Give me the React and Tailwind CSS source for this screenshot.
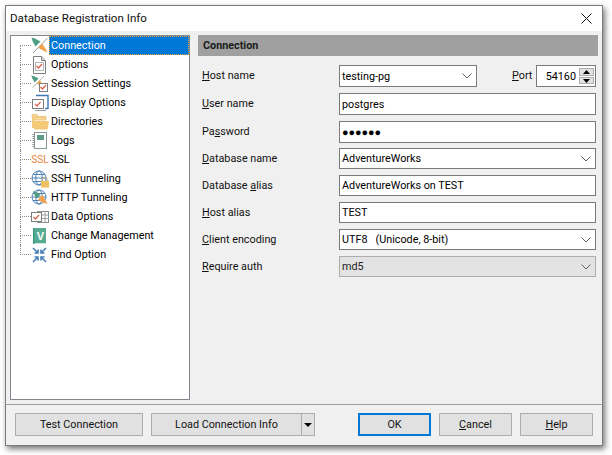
const font = "font-['Roboto',Arial,sans-serif]";

function Plug() {
  return (
    <g>
      <path d="M16.5 1 2 16" stroke="#9a9a9a" strokeWidth="1" fill="none" />
      <path d="M0.5 0.5 4 1.5 9.5 4.5 4.5 9.5 1.5 4Z" fill="#4f9e84" />
      <path d="M9 8.5 11 6.5 14.5 11.5 16.5 15.5 13 14 7.5 11Z" fill="#f5a24c" />
    </g>
  );
}

function Check({ x, y, s = 1 }) {
  return <path d={`M${x} ${y + 2 * s}l${2 * s} ${2 * s} ${3.5 * s} -${4 * s}`} stroke="#d9644f" strokeWidth="1.3" fill="none" />;
}

function Globe() {
  return (
    <g fill="none" stroke="#4f81b5" strokeWidth="1">
      <circle cx="8" cy="8" r="7" />
      <ellipse cx="8" cy="8" rx="3.2" ry="7" />
      <path d="M1 8h14M2 4.5h12M2 11.5h12" />
    </g>
  );
}

const icons = {
  connection: <Plug />,
  options: (
    <>
      <path d="M2.5 0.5h8l4 4v13h-12Z" fill="#fff" stroke="#7d7d7d" />
      <path d="M10.5 0.5v4h4" fill="#ddd" stroke="#7d7d7d" />
      <rect x="4.5" y="6.5" width="8" height="8" fill="#fff" stroke="#b5b5b5" />
      <Check x={5.5} y={8} />
    </>
  ),
  session: (
    <>
      <g transform="scale(0.8)"><Plug /></g>
      <rect x="8.5" y="8.5" width="8" height="8" fill="#fff" stroke="#7d7d7d" />
      <Check x={9.5} y={10} />
    </>
  ),
  display: (
    <>
      <path d="M5 1.5h12v13h-3" fill="none" stroke="#3f77b4" strokeWidth="1.4" />
      <rect x="1.5" y="5.5" width="11" height="9" fill="#fff" stroke="#7d7d7d" />
      <path d="M4 16.5h11" stroke="#999" />
      <Check x={4} y={8} />
    </>
  ),
  directories: (
    <>
      <path d="M1 3V1.5h5l1 2h8V7H3Z" fill="#f7d9a0" stroke="#e9b765" strokeWidth="0.7" />
      <path d="M1 3v12h2V5h11V3Z" fill="#f5c97c" />
      <path d="M3 8h15l-1.5 8.5H3Z" fill="#f3c877" />
    </>
  ),
  logs: (
    <>
      <rect x="3.5" y="0.5" width="12" height="16" fill="#fff" stroke="#8a9a94" />
      <rect x="6" y="3" width="7" height="5" fill="#5d9b88" />
      <path d="M2.5 2v14" stroke="#8a8a8a" strokeDasharray="1 1" strokeWidth="2" />
    </>
  ),
  ssh: (
    <>
      <Globe />
      <path d="M11.5 11V9.5a2.2 2.2 0 0 1 4.5 0V11" fill="none" stroke="#b9a98a" strokeWidth="1.2" />
      <rect x="10" y="11" width="8" height="6.5" fill="#efc05f" />
    </>
  ),
  http: (
    <>
      <Globe />
      <path d="M2 2 6 3.5 9.5 6 6 9.5 3.5 6Z" fill="#4f9e84" />
      <path d="M9 8 11.5 6 15 12 16.5 15 13 14 7 11Z" fill="#f5a24c" />
    </>
  ),
  data: (
    <>
      <rect x="6.5" y="3.5" width="11" height="11" fill="#fff" stroke="#8d8d8d" />
      <path d="M10 3.5v11M14 3.5v11M6.5 7h11M6.5 10.5h11" stroke="#a0a0a0" fill="none" />
      <rect x="0.5" y="4.5" width="10" height="9" fill="#fff" stroke="#7d7d7d" />
      <Check x={2.5} y={7} />
    </>
  ),
  change: (
    <>
      <rect x="2" y="1" width="13" height="16" fill="#57ab92" />
      <rect x="2" y="1" width="1.5" height="16" fill="#3e9a80" />
      <path d="M3.5 16.5H15" stroke="#cfe6de" />
      <text x="9.5" y="13" textAnchor="middle" fontSize="11" fontWeight="700" fontFamily="Liberation Sans" fill="#fff">V</text>
    </>
  ),
  find: (
    <g stroke="#4a7fb8" strokeWidth="1.6" fill="none">
      <path d="M2 2 7 7M7 3.5V7H3.5M15 2 10 7M10 3.5V7h3.5M2 16 7 11M7 14.5V11H3.5M15 16 10 11M10 14.5V11h3.5" />
    </g>
  ),
};

const treeItems = [
  { label: "Connection", icon: "connection" },
  { label: "Options", icon: "options" },
  { label: "Session Settings", icon: "session" },
  { label: "Display Options", icon: "display" },
  { label: "Directories", icon: "directories" },
  { label: "Logs", icon: "logs" },
  { label: "SSL", icon: "ssl" },
  { label: "SSH Tunneling", icon: "ssh" },
  { label: "HTTP Tunneling", icon: "http" },
  { label: "Data Options", icon: "data" },
  { label: "Change Management", icon: "change" },
  { label: "Find Option", icon: "find" },
];

function TreeRow({ item, first, last }) {
  return (
    <div className="flex h-[19px] items-stretch">
      <div className="ml-[9px] w-[11px] shrink-0">
        <div className={`h-[10px] border-b border-dotted border-[#8a8a8a] ${first ? "" : "border-l"}`} />
        <div className={`h-[9px] border-dotted border-[#8a8a8a] ${last ? "" : "border-l"}`} />
      </div>
      <div className="flex w-[18px] shrink-0 items-center justify-center">
        {item.icon === "ssl" ? (
          <span className="text-[10px] leading-none text-[#e8853b]">SSL</span>
        ) : (
          <svg width="18" height="18" viewBox="0 0 18 18">{icons[item.icon]}</svg>
        )}
      </div>
      {first ? (
        <div className="flex flex-1 items-center bg-[#0078d7] pl-[2px] text-white outline-1 -outline-offset-1 outline-dotted outline-[#f0a030]">
          {item.label}
        </div>
      ) : (
        <div className="flex flex-1 items-center pl-[2px] text-[#000]">{item.label}</div>
      )}
    </div>
  );
}

function Chevron() {
  return (
    <svg width="10" height="6" viewBox="0 0 10 6" className="shrink-0">
      <path d="M0.5 0.5 5 5l4.5-4.5" fill="none" stroke="#606060" />
    </svg>
  );
}

function Field({ children, combo, disabled, className = "h-[21px]" }) {
  return (
    <div
      className={`flex flex-1 items-center justify-between border pl-[2px] pr-[4px] ${className} ${
        disabled ? "border-[#adadad] bg-[#e3e3e3] text-[#222]" : "border-[#7a7a7a] bg-white text-black"
      }`}
    >
      <span className="whitespace-pre">{children}</span>
      {combo ? <Chevron /> : null}
    </div>
  );
}

function Row({ label, children, tall }) {
  return (
    <div className={`flex items-center ${tall ? "h-[22px]" : "h-[21px]"}`}>
      <div className={`w-[141px] shrink-0 pl-[4px] text-[#111] ${tall ? "pb-[2px]" : ""}`}>{label}</div>
      {children}
    </div>
  );
}

function SpinButton({ up }) {
  return (
    <div className={`flex w-[15px] items-center justify-center border border-[#adadad] bg-[#e1e1e1] ${up ? "h-[8px]" : "h-[7px]"}`}>
      <svg width="7" height="4" viewBox="0 0 7 4">
        <path d={up ? "M3.5 0 7 4H0Z" : "M0 0h7L3.5 4Z"} fill="#000" />
      </svg>
    </div>
  );
}

function Button({ children, className = "", primary }) {
  return (
    <button
      type="button"
      className={`flex h-[23px] items-center justify-center bg-[#e1e1e1] text-[#111] ${
        primary ? "border-2 border-[#0078d7]" : "border border-[#adadad]"
      } ${className}`}
    >
      {children}
    </button>
  );
}

export default function App() {
  return (
    <div className={`${font} h-[455px] w-[612px] overflow-hidden bg-white pl-[5px] pt-[5px] text-[10.8px] leading-[13px]`}>
      <div className="flex h-[441px] w-[598px] flex-col border border-[#7a7a7a] bg-[#f0f0f0] shadow-[2px_3px_6px_rgba(0,0,0,0.55)]">
        <div className="flex h-[25px] shrink-0 items-center justify-between bg-white pl-[4px] pr-[10px] text-[11.6px] text-[#111]">
          <span>Database Registration Info</span>
          <svg width="11" height="11" viewBox="0 0 11 11">
            <path d="M0.5 0.5l10 10M10.5 0.5l-10 10" stroke="#111" fill="none" />
          </svg>
        </div>

        <div className="flex h-[373px] shrink-0 gap-[8px] pl-[4px] pt-[4px]">
          <div className="h-[365px] w-[180px] shrink-0 border border-[#828790] bg-white py-0">
            {treeItems.map((item, i) => (
              <TreeRow key={item.label} item={item} first={i === 0} last={i === treeItems.length - 1} />
            ))}
          </div>

          <div className="w-[400px]">
            <div className="flex h-[21px] items-center bg-[#a0a0a0] pl-[5px] font-bold text-[#1a1a1a]">Connection</div>

            <div className="mt-[9px] flex flex-col gap-[6px]">
              <Row tall label={<><u>H</u>ost name</>}>
                <Field combo className="h-[22px]">testing-pg</Field>
                <span className="ml-[35px] w-[24px] shrink-0 pb-[2px] text-[#111]"><u>P</u>ort</span>
                <div className="mr-[2px] flex h-[22px] w-[60px] shrink-0 items-center justify-end gap-[3px] border border-[#7a7a7a] bg-white pr-[1px]">
                  <span>54160</span>
                  <div className="flex flex-col gap-[1px]">
                    <SpinButton up />
                    <SpinButton />
                  </div>
                </div>
              </Row>
              <Row tall label={<><u>U</u>ser name</>}>
                <Field className="mr-[2px] h-[22px]">postgres</Field>
              </Row>
              <Row tall label={<>Pa<u>s</u>sword</>}>
                <Field className="mr-[2px] h-[22px]">●●●●●●</Field>
              </Row>
            </div>

            <div className="mt-[5px] flex flex-col gap-[6px] pr-[2px]">
              <Row label={<><u>D</u>atabase name</>}>
                <Field combo>AdventureWorks</Field>
              </Row>
              <Row label={<>Database <u>a</u>lias</>}>
                <Field>AdventureWorks on TEST</Field>
              </Row>
              <Row label={<><u>H</u>ost alias</>}>
                <Field>TEST</Field>
              </Row>
              <Row label={<><u>C</u>lient encoding</>}>
                <Field combo>{"UTF8   (Unicode, 8-bit)"}</Field>
              </Row>
              <Row label={<><u>R</u>equire auth</>}>
                <Field combo disabled>md5</Field>
              </Row>
            </div>
          </div>
        </div>

        <div className="flex flex-1 items-start border-t border-[#a0a0a0] pl-[9px] pt-[8px]">
          <Button className="w-[128px]">Test Connection</Button>
          <div className="ml-[8px] flex">
            <Button className="w-[151px]">Load Connection Info</Button>
            <Button className="-ml-px w-[14px]">
              <svg width="8" height="4" viewBox="0 0 8 4">
                <path d="M0 0h8L4 4Z" fill="#000" />
              </svg>
            </Button>
          </div>
          <Button primary className="ml-[43px] w-[73px]">OK</Button>
          <Button className="ml-[8px] w-[73px]"><span><u>C</u>ancel</span></Button>
          <Button className="ml-[8px] w-[73px]"><span><u>H</u>elp</span></Button>
        </div>
      </div>
    </div>
  );
}
